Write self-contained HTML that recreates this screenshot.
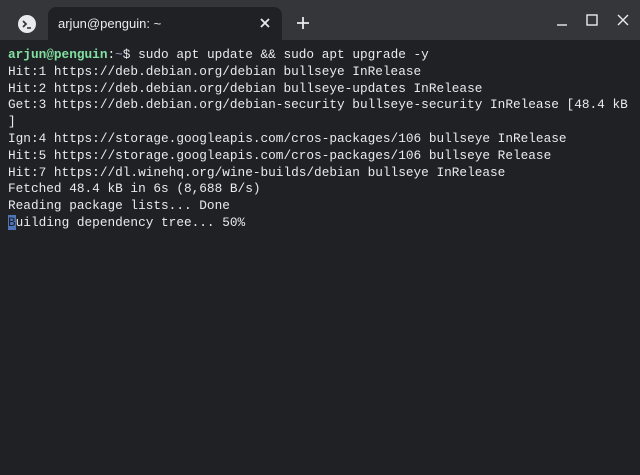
<!DOCTYPE html>
<html><head><style>
html,body{margin:0;padding:0;width:640px;height:475px;overflow:hidden;background:#202124;}
.bar{position:absolute;left:0;top:0;width:640px;height:40px;background:#35363a;}
.tab{position:absolute;left:48px;top:7px;width:234px;height:33px;background:#202124;border-radius:8px 8px 0 0;}
.tabt{position:absolute;left:58px;top:16px;font:13px "Liberation Sans",sans-serif;color:#e8eaed;}
.icon{position:absolute;left:18px;top:15px;width:18px;height:18px;border-radius:50%;background:#e8eaed;}
pre{position:absolute;left:8px;top:47px;margin:0;font:12.75px/16.8px "Liberation Mono",monospace;color:#e8eaed;}
.g{color:#80e0a0;font-weight:bold}.b{color:#9aa0c8}
.cur{background:#4f74b8;color:#202124}
</style></head><body>
<div class="bar"></div>
<div class="tab"></div>
<div class="icon"><svg width="18" height="18" viewBox="0 0 18 18"><path d="M5 6l3 3-3 3" stroke="#35363a" stroke-width="1.8" fill="none"/><path d="M9 13h4" stroke="#35363a" stroke-width="1.6"/></svg></div>
<div class="tabt">arjun@penguin: ~</div>
<svg style="position:absolute;left:259px;top:17px" width="12" height="12"><path d="M2 2l8 8M10 2l-8 8" stroke="#e8eaed" stroke-width="1.8"/></svg>
<svg style="position:absolute;left:296px;top:16px" width="14" height="14"><path d="M7 1v12M1 7h12" stroke="#e8eaed" stroke-width="1.8"/></svg>
<svg style="position:absolute;left:556px;top:14px" width="12" height="12"><path d="M1 11h10" stroke="#e8eaed" stroke-width="1.4"/></svg>
<svg style="position:absolute;left:586px;top:14px" width="12" height="12"><rect x="1" y="1" width="10" height="10" stroke="#e8eaed" stroke-width="1.4" fill="none"/></svg>
<svg style="position:absolute;left:617px;top:14px" width="12" height="12"><path d="M1 1l10 10M11 1l-10 10" stroke="#e8eaed" stroke-width="1.4"/></svg>
<pre><span class="g">arjun@penguin</span>:<span class="b">~</span>$ sudo apt update &amp;&amp; sudo apt upgrade -y
Hit:1 https://deb.debian.org/debian bullseye InRelease
Hit:2 https://deb.debian.org/debian bullseye-updates InRelease
Get:3 https://deb.debian.org/debian-security bullseye-security InRelease [48.4 kB
]
Ign:4 https://storage.googleapis.com/cros-packages/106 bullseye InRelease
Hit:5 https://storage.googleapis.com/cros-packages/106 bullseye Release
Hit:7 https://dl.winehq.org/wine-builds/debian bullseye InRelease
Fetched 48.4 kB in 6s (8,688 B/s)
Reading package lists... Done
<span class="cur">B</span>uilding dependency tree... 50%</pre>
</body></html>
